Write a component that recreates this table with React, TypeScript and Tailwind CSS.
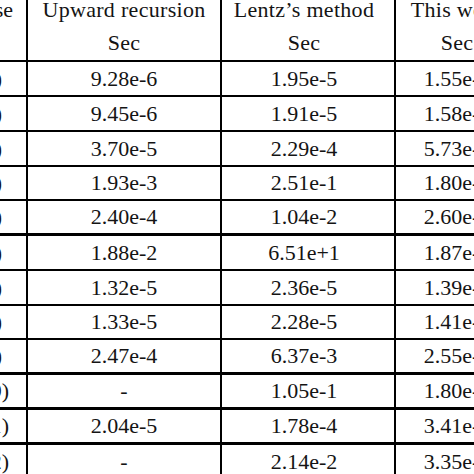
import React from "react";

type Row = { c: string; pr: string; a: string; b: string; d: string; h: string; bb: string };

const rows: Row[] = [
  { c: "(1, 10)", pr: "pr-[24px]", a: "9.28e-6", b: "1.95e-5", d: "1.55e-5", h: "h-[35px]", bb: "border-b-2" },
  { c: "(1, 20)", pr: "pr-[24px]", a: "9.45e-6", b: "1.91e-5", d: "1.58e-5", h: "h-[35px]", bb: "border-b-2" },
  { c: "(1, 50)", pr: "pr-[24px]", a: "3.70e-5", b: "2.29e-4", d: "5.73e-5", h: "h-[35px]", bb: "border-b-2" },
  { c: "(1, 80)", pr: "pr-[24px]", a: "1.93e-3", b: "2.51e-1", d: "1.80e-4", h: "h-[34px]", bb: "border-b-2" },
  { c: "(1, 90)", pr: "pr-[24px]", a: "2.40e-4", b: "1.04e-2", d: "2.60e-4", h: "h-[35px]", bb: "border-b-[3px]" },
  { c: "(2, 10)", pr: "pr-[24px]", a: "1.88e-2", b: "6.51e+1", d: "1.87e-4", h: "h-[35px]", bb: "border-b-2" },
  { c: "(2, 20)", pr: "pr-[24px]", a: "1.32e-5", b: "2.36e-5", d: "1.39e-5", h: "h-[35px]", bb: "border-b-2" },
  { c: "(2, 50)", pr: "pr-[24px]", a: "1.33e-5", b: "2.28e-5", d: "1.41e-5", h: "h-[34px]", bb: "border-b-2" },
  { c: "(2, 80)", pr: "pr-[24px]", a: "2.47e-4", b: "6.37e-3", d: "2.55e-4", h: "h-[35px]", bb: "border-b-[3px]" },
  { c: "(a, 9)", pr: "pr-[17px]", a: "-", b: "1.05e-1", d: "1.80e-4", h: "h-[35px]", bb: "border-b-[3px]" },
  { c: "(b, 1)", pr: "pr-[17px]", a: "2.04e-5", b: "1.78e-4", d: "3.41e-5", h: "h-[35px]", bb: "border-b-[3px]" },
  { c: "(c, 2)", pr: "pr-[17px]", a: "-", b: "2.14e-2", d: "3.35e-4", h: "h-[35px]", bb: "border-b-2" },
];

export default function App() {
  return (
    <div className="w-[474px] h-[474px] overflow-hidden bg-white text-[#141414] font-['Liberation_Serif',serif] text-[22px]">
      <div className="w-[520px]">
        {/* header */}
        <div className="flex h-[62px] border-b-2 border-black">
          <div className="w-[28px] shrink-0 border-r-2 border-black overflow-hidden">
            <div className="flex justify-end pr-[13px] mt-[-7px] leading-[33px] whitespace-nowrap">Case</div>
          </div>
          <div className="w-[194px] shrink-0 border-r-2 border-black">
            <div className="flex flex-col items-center mt-[-7px] leading-[33px] whitespace-nowrap tracking-[0.3px]">
              <span>Upward recursion</span>
              <span>Sec</span>
            </div>
          </div>
          <div className="w-[174px] shrink-0 border-r-2 border-black">
            <div className="flex flex-col items-center mt-[-7px] leading-[33px] whitespace-nowrap tracking-[0.3px] pr-[8px]">
              <span>Lentz’s method</span>
              <span>Sec</span>
            </div>
          </div>
          <div className="w-[122px] shrink-0">
            <div className="flex flex-col items-center mt-[-7px] leading-[33px] whitespace-nowrap tracking-[0.3px]">
              <span>This work</span>
              <span>Sec</span>
            </div>
          </div>
        </div>
        {rows.map((r, i) => (
          <div key={i} className={`flex ${r.h} ${r.bb} border-black`}>
            <div className="w-[28px] shrink-0 border-r-2 border-black overflow-hidden flex items-center justify-end">
              <span className={`${r.pr} leading-[22px] whitespace-nowrap`}>{r.c}</span>
            </div>
            <div className="w-[194px] shrink-0 border-r-2 border-black flex items-center justify-center">
              <span className="leading-[22px]">{r.a}</span>
            </div>
            <div className="w-[174px] shrink-0 border-r-2 border-black flex items-center justify-center pr-[8px]">
              <span className="leading-[22px]">{r.b}</span>
            </div>
            <div className="w-[122px] shrink-0 flex items-center justify-center">
              <span className="leading-[22px]">{r.d}</span>
            </div>
          </div>
        ))}
      </div>
    </div>
  );
}
